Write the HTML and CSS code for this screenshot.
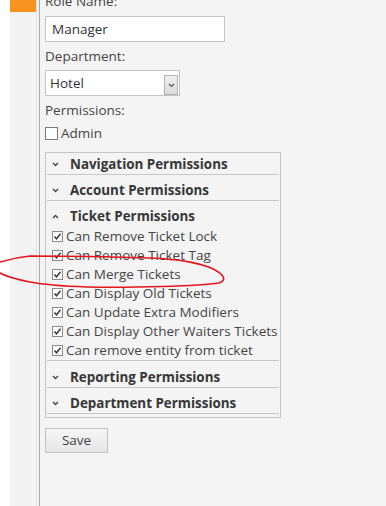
FILE: index.html
```html
<!DOCTYPE html>
<html>
<head>
<meta charset="utf-8">
<link rel="stylesheet" href="styles.css">
</head>
<body>
<div class="app">
  <aside class="rail"><div class="rail-accent"></div></aside>
  <div class="rail-gap"></div>
  <main class="content">
    <div class="label label-first">Role Name:</div>
    <div class="textbox">Manager</div>
    <div class="label">Department:</div>
    <div class="select">
      <span class="select-value">Hotel</span>
      <span class="select-btn"><svg width="7" height="5" viewBox="0 0 7 5"><polyline points="1,1 3.5,3.5 6,1" fill="none" stroke="#555" stroke-width="1.2"/></svg></span>
    </div>
    <div class="label">Permissions:</div>
    <div class="check-row">
      <span class="check-box"></span><span class="check-text">Admin</span>
    </div>

    <div class="panel">
      <div class="section-head head-first">
        <svg class="chev" width="7" height="5" viewBox="0 0 7 5"><polyline points="1,1 3.5,3.5 6,1" fill="none" stroke="#444" stroke-width="1.4"/></svg>
        <span>Navigation Permissions</span>
      </div>
      <div class="section-head">
        <svg class="chev" width="7" height="5" viewBox="0 0 7 5"><polyline points="1,1 3.5,3.5 6,1" fill="none" stroke="#444" stroke-width="1.4"/></svg>
        <span>Account Permissions</span>
      </div>
      <div class="section-head open">
        <svg class="chev" width="7" height="5" viewBox="0 0 7 5"><polyline points="1,4 3.5,1.5 6,4" fill="none" stroke="#444" stroke-width="1.4"/></svg>
        <span>Ticket Permissions</span>
      </div>
      <div class="items">
        <div class="item"><svg class="cb" width="11" height="11" viewBox="0 0 11 11"><rect x="0.5" y="0.5" width="10" height="10" fill="#fff" stroke="#8a8a8a"/><polyline points="2.5,5.5 4.5,7.8 8.5,2.8" fill="none" stroke="#333" stroke-width="1.4"/></svg><span>Can Remove Ticket Lock</span></div>
        <div class="item"><svg class="cb" width="11" height="11" viewBox="0 0 11 11"><rect x="0.5" y="0.5" width="10" height="10" fill="#fff" stroke="#8a8a8a"/><polyline points="2.5,5.5 4.5,7.8 8.5,2.8" fill="none" stroke="#333" stroke-width="1.4"/></svg><span>Can Remove Ticket Tag</span></div>
        <div class="item"><svg class="cb" width="11" height="11" viewBox="0 0 11 11"><rect x="0.5" y="0.5" width="10" height="10" fill="#fff" stroke="#8a8a8a"/><polyline points="2.5,5.5 4.5,7.8 8.5,2.8" fill="none" stroke="#333" stroke-width="1.4"/></svg><span>Can Merge Tickets</span></div>
        <div class="item"><svg class="cb" width="11" height="11" viewBox="0 0 11 11"><rect x="0.5" y="0.5" width="10" height="10" fill="#fff" stroke="#8a8a8a"/><polyline points="2.5,5.5 4.5,7.8 8.5,2.8" fill="none" stroke="#333" stroke-width="1.4"/></svg><span>Can Display Old Tickets</span></div>
        <div class="item"><svg class="cb" width="11" height="11" viewBox="0 0 11 11"><rect x="0.5" y="0.5" width="10" height="10" fill="#fff" stroke="#8a8a8a"/><polyline points="2.5,5.5 4.5,7.8 8.5,2.8" fill="none" stroke="#333" stroke-width="1.4"/></svg><span>Can Update Extra Modifiers</span></div>
        <div class="item"><svg class="cb" width="11" height="11" viewBox="0 0 11 11"><rect x="0.5" y="0.5" width="10" height="10" fill="#fff" stroke="#8a8a8a"/><polyline points="2.5,5.5 4.5,7.8 8.5,2.8" fill="none" stroke="#333" stroke-width="1.4"/></svg><span>Can Display Other Waiters Tickets</span></div>
        <div class="item"><svg class="cb" width="11" height="11" viewBox="0 0 11 11"><rect x="0.5" y="0.5" width="10" height="10" fill="#fff" stroke="#8a8a8a"/><polyline points="2.5,5.5 4.5,7.8 8.5,2.8" fill="none" stroke="#333" stroke-width="1.4"/></svg><span>Can remove entity from ticket</span></div>
      </div>
      <div class="section-head after-items">
        <svg class="chev" width="7" height="5" viewBox="0 0 7 5"><polyline points="1,1 3.5,3.5 6,1" fill="none" stroke="#444" stroke-width="1.4"/></svg>
        <span>Reporting Permissions</span>
      </div>
      <div class="section-head">
        <svg class="chev" width="7" height="5" viewBox="0 0 7 5"><polyline points="1,1 3.5,3.5 6,1" fill="none" stroke="#444" stroke-width="1.4"/></svg>
        <span>Department Permissions</span>
      </div>
    </div>

    <div class="button">Save</div>
  </main>
</div>
<svg class="annotation" width="386" height="506" viewBox="0 0 386 506">
  <path d="M0,262 C10,259 20,257 30,256 C80,256 120,257 150,258 C180,259 205,264 215,270 C224,275 227,280 219,283 C200,286 130,288 87,287 C60,286 40,284 30,282 C15,279 5,276 0,273" fill="none" stroke="#e8141c" stroke-width="1.6" stroke-linecap="round"/>
</svg>
</body>
</html>
```

FILE: styles.css
```css
html, body {
  margin: 0;
  padding: 0;
  background: #ffffff;
}
body {
  font-family: "Open Sans", "Noto Sans", sans-serif;
  font-size: 13.5px;
  color: #3d3d3d;
  position: relative;
  width: 386px;
  height: 506px;
  overflow: hidden;
}
.app {
  display: flex;
  height: 506px;
}
.rail {
  margin-left: 10px;
  width: 26px;
  background: #f3f3f3;
  border-right: 1px solid #e4e4e4;
  flex: none;
}
.rail-accent {
  height: 12px;
  background: #f7931e;
}
.rail-gap {
  width: 2px;
  border-right: 1px solid #a9a9a9;
  background: #f3f3f3;
  flex: none;
}
.content {
  flex: 1;
  background: #f4f4f4;
  padding-left: 5px;
  display: flex;
  flex-direction: column;
  align-items: flex-start;
}
.label {
  line-height: 16px;
  height: 16px;
  margin-top: 6px;
  color: #444;
}
.label-first {
  margin-top: -7px;
}
.textbox {
  margin-top: 7px;
  box-sizing: border-box;
  width: 180px;
  height: 26px;
  border: 1px solid #c4c4c4;
  background: #fff;
  padding-left: 6px;
  line-height: 24px;
  color: #333;
}
.select {
  margin-top: 6px;
  box-sizing: border-box;
  width: 135px;
  height: 26px;
  border: 1px solid #c4c4c4;
  background: #fff;
  display: flex;
  align-items: center;
  justify-content: space-between;
  padding: 0 1px 0 4px;
  color: #333;
}
.select-btn {
  box-sizing: border-box;
  width: 14px;
  height: 20px;
  margin-top: 4px;
  border: 1px solid #b4b4b4;
  background: linear-gradient(#f0f0f0, #dcdcdc);
  display: flex;
  align-items: center;
  justify-content: center;
}
.check-row {
  margin-top: 7px;
  display: flex;
  align-items: center;
  height: 16px;
  line-height: 16px;
}
.check-box {
  box-sizing: border-box;
  width: 13px;
  height: 13px;
  border: 1px solid #7a7a7a;
  background: #fff;
  margin-right: 3px;
}
.check-text {
  color: #444;
}
.panel {
  margin-top: 11px;
  box-sizing: border-box;
  width: 236px;
  border: 1px solid #c6c6c6;
  padding: 0 1px 3px 1px;
}
.section-head {
  display: flex;
  align-items: center;
  padding: 7px 0 2px 0;
  line-height: 16px;
  border-bottom: 1px solid #c8c8c8;
  font-weight: 700;
  font-size: 13.4px;
  color: #363636;
}
.section-head.head-first {
  padding-top: 3px;
}
.section-head.open {
  border-bottom: none;
}
.section-head.after-items {
  padding-top: 8px;
}
.chev {
  margin-left: 5px;
  margin-right: 11px;
  flex: none;
}
.items {
  margin-top: 1px;
  border-bottom: 1px solid #c8c8c8;
}
.item {
  display: flex;
  align-items: center;
  height: 19px;
  line-height: 19px;
  padding-left: 5px;
  color: #444;
  white-space: nowrap;
}
.cb {
  flex: none;
  margin-right: 3px;
}
.button {
  margin-top: 10px;
  box-sizing: border-box;
  width: 63px;
  height: 25px;
  border: 1px solid #c2c2c2;
  background: linear-gradient(#f6f6f6, #e6e6e6);
  text-align: center;
  line-height: 23px;
  color: #444;
}
.annotation {
  position: absolute;
  left: 0;
  top: 0;
  pointer-events: none;
}
```
